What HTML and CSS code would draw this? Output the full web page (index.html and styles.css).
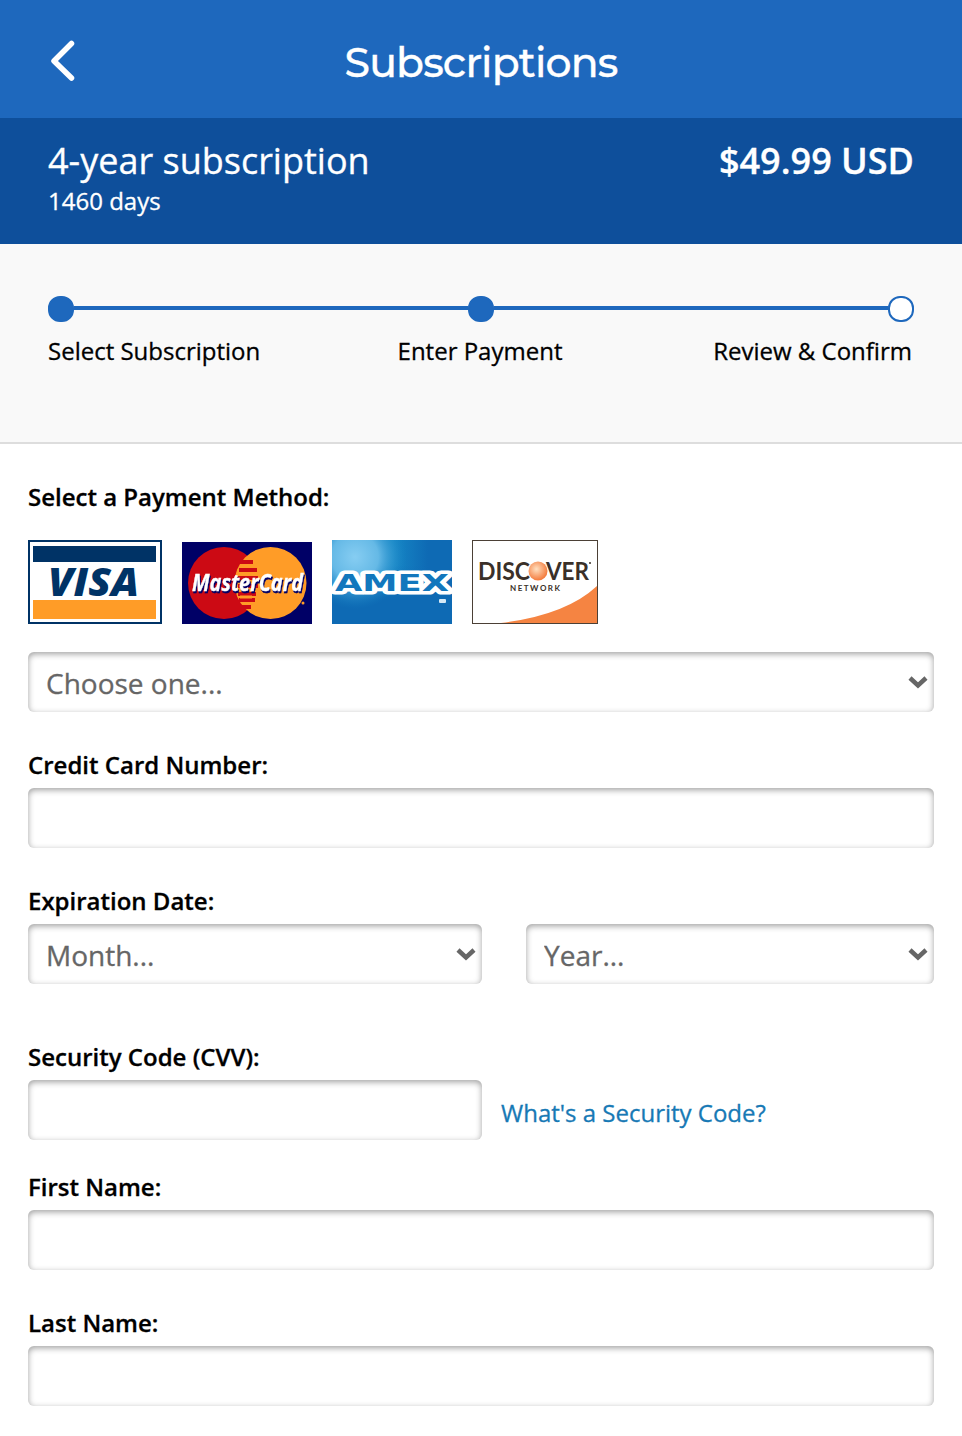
FILE: index.html
```
<!DOCTYPE html>
<html lang="en">
<head>
  <meta charset="UTF-8">
  <title>Subscriptions</title>
  <link rel="stylesheet" href="styles.css">
</head>
<body>

  <header class="top-bar">
    <a href="#" class="back" aria-label="Back">
      <svg width="26" height="42" viewBox="0 0 26 42"><path d="M21.500 3.500 L4 21 L21.500 38" fill="none" stroke="#fff" stroke-width="5.500" stroke-linecap="round" stroke-linejoin="round"/></svg>
    </a>
    <h1>Subscriptions</h1>
  </header>

  <section class="plan">
    <div>
      <div class="plan-name">4-year subscription</div>
      <div class="plan-days">1460 days</div>
    </div>
    <div class="plan-price">$49.99 USD</div>
  </section>

  <section class="progress">
    <div class="track">
      <span class="dot"></span>
      <span class="line"></span>
      <span class="dot"></span>
      <span class="line"></span>
      <span class="dot empty"></span>
    </div>
    <div class="steps">
      <span>Select Subscription</span>
      <span>Enter Payment</span>
      <span>Review &amp; Confirm</span>
    </div>
  </section>

  <form class="payment">
    <label for="method">Select a Payment Method:</label>

    <div class="cards">
      <svg width="134" height="84" viewBox="0 0 134 84">
        <rect x="1" y="1" width="132" height="82" fill="#fff" stroke="#003366" stroke-width="2"/>
        <rect x="5" y="6" width="123" height="16" fill="#003366"/>
        <rect x="5" y="60" width="123" height="19" fill="#ff9c27"/>
        <text x="20" y="56" class="visa" textLength="91" lengthAdjust="spacingAndGlyphs">VISA</text>
      </svg>
      <svg width="130" height="82" viewBox="0 0 130 82">
        <rect width="130" height="82" fill="#000066"/>
        <circle cx="42" cy="41" r="36" fill="#cc0a14"/>
        <circle cx="88.500" cy="41" r="36" fill="#ff9c27"/>
        <path d="M58 20h13M57 28h18M56 36h20M56 44h20M56 52h18M57 58h16M60 65h9" stroke="#cc0a14" stroke-width="4"/>
        <path d="M60 24h13M57 32h13M56 48h14M58 55h12M61 61.500h11" stroke="#ff9c27" stroke-width="3"/>
        <text x="10" y="49" class="mastercard" textLength="111" lengthAdjust="spacingAndGlyphs">MasterCard</text>
        <circle cx="121" cy="61" r="1.500" fill="#ff9c27"/>
      </svg>
      <svg width="120" height="84" viewBox="0 0 120 84">
        <defs>
          <linearGradient id="amexBase" x1="0" y1="0" x2="1" y2="0">
            <stop offset="0" stop-color="#1b7fc4"/>
            <stop offset=".5" stop-color="#1687c6"/>
            <stop offset=".8" stop-color="#0e6ab4"/>
          </linearGradient>
          <radialGradient id="amexGlow" gradientUnits="userSpaceOnUse" cx="23" cy="17" r="52">
            <stop offset="0" stop-color="#86cdf2"/>
            <stop offset=".45" stop-color="#65b9e6"/>
            <stop offset="1" stop-color="#1283c4" stop-opacity="0"/>
          </radialGradient>
          <linearGradient id="amexLow" x1="0" y1="0" x2="0" y2="1">
            <stop offset=".3" stop-color="#0e6ab4" stop-opacity="0"/>
            <stop offset=".7" stop-color="#0e6ab4"/>
          </linearGradient>
        </defs>
        <rect width="120" height="84" fill="url(#amexBase)"/>
        <rect width="120" height="84" fill="url(#amexLow)"/>
        <rect width="120" height="84" fill="url(#amexGlow)"/>
        <text x="3" y="51" class="amex" textLength="114" lengthAdjust="spacingAndGlyphs">AMEX</text>
        <rect x="107" y="59" width="7" height="4" rx="1" fill="#d5e9f6"/>
      </svg>
      <svg width="126" height="84" viewBox="0 0 126 84">
        <defs>
          <radialGradient id="discoverBall" cx=".42" cy=".4" r=".6">
            <stop offset="0" stop-color="#ffe0c0"/>
            <stop offset="1" stop-color="#f47b3c"/>
          </radialGradient>
        </defs>
        <rect width="126" height="84" fill="#fff"/>
        <path d="M29 83 Q94 75 125 46 V83 Z" fill="#f58442"/>
        <rect x=".5" y=".5" width="125" height="83" fill="none" stroke="#4b4036"/>
        <text x="6" y="40" class="discover" textLength="52" lengthAdjust="spacingAndGlyphs">DISC</text>
        <circle cx="66" cy="31" r="9.500" fill="url(#discoverBall)"/>
        <text x="74" y="40" class="discover" textLength="43" lengthAdjust="spacingAndGlyphs">VER</text>
        <circle cx="118" cy="23" r="1" fill="#3a3029"/>
        <text x="38" y="51" class="network" textLength="50" lengthAdjust="spacing">NETWORK</text>
      </svg>
    </div>

    <div class="select">
      <select id="method">
        <option>Choose one...</option>
        <option>Visa</option>
        <option>MasterCard</option>
        <option>American Express</option>
        <option>Discover</option>
      </select>
      <svg class="arrow" width="20" height="14" viewBox="0 0 20 14"><path d="M2 3 L10 10.500 L18 3" fill="none" stroke="#666" stroke-width="4.500"/></svg>
    </div>

    <label for="number">Credit Card Number:</label>
    <input type="text" id="number">

    <label for="month">Expiration Date:</label>
    <div class="row expiration">
      <div class="select half">
        <select id="month">
          <option>Month...</option>
        </select>
        <svg class="arrow" width="20" height="14" viewBox="0 0 20 14"><path d="M2 3 L10 10.500 L18 3" fill="none" stroke="#666" stroke-width="4.500"/></svg>
      </div>
      <div class="select year">
        <select id="year" aria-label="Year">
          <option>Year...</option>
        </select>
        <svg class="arrow" width="20" height="14" viewBox="0 0 20 14"><path d="M2 3 L10 10.500 L18 3" fill="none" stroke="#666" stroke-width="4.500"/></svg>
      </div>
    </div>

    <label for="cvv">Security Code (CVV):</label>
    <div class="row cvv">
      <input type="text" id="cvv" class="half">
      <a href="#" class="help">What's a Security Code?</a>
    </div>

    <label for="first">First Name:</label>
    <input type="text" id="first">

    <label for="last">Last Name:</label>
    <input type="text" id="last">
  </form>

</body>
</html>
```
FILE: styles.css
```
* {
  box-sizing: border-box;
}

body {
  margin: 0;
  font-family: "Open Sans", "Noto Sans", sans-serif;
  font-size: 24px;
  line-height: 32px;
  color: #000;
  background-color: #fff;
  -webkit-text-stroke: 0.3px;
}

.top-bar {
  display: grid;
  grid-template-columns: 1fr auto 1fr;
  align-items: center;
  height: 118px;
  padding: 4px 48px 0;
  background-color: #1e68bd;
  color: #fff;
}

.back {
  display: flex;
  padding-left: 2px;
}

h1 {
  margin: 0;
  padding-top: 2px;
  font-family: Montserrat, Inter, sans-serif;
  font-size: 41px;
  font-weight: 500;
  line-height: 50px;
  letter-spacing: -0.85px;
}

.plan {
  display: flex;
  justify-content: space-between;
  height: 126px;
  padding: 18px 48px 0;
  background-color: #0e4f9b;
  color: #fff;
}

.plan-name,
.plan-price {
  font-size: 36px;
  line-height: 50px;
}

.plan-days {
  margin-top: -1px;
}

.plan-price {
  font-weight: 600;
}

.progress {
  height: 200px;
  padding: 52px 48px 0;
  background-color: #f9f9f9;
  border-bottom: 2px solid #ddd;
}

.track {
  display: flex;
}

.dot {
  width: 26px;
  height: 26px;
  border: 2px solid #1e68bd;
  border-radius: 12px;
  background-color: #1e68bd;
}

.dot.empty {
  background-color: #fff;
}

.line {
  flex: 1;
  height: 4px;
  margin-top: 10px;
  background-color: #1e68bd;
}

.steps {
  display: grid;
  grid-template-columns: 1fr auto 1fr;
  margin: 13px 2px 0 0;
}

.steps span:last-child {
  text-align: right;
}

.payment {
  padding: 37px 28px 30px;
}

label {
  display: block;
  margin: 37px 0 7px;
  font-weight: 600;
}

label:first-child {
  margin: 0;
}

.cards {
  display: flex;
  align-items: flex-end;
  gap: 20px;
  margin: 27px 0 28px;
}

.visa {
  font: italic 800 39px "Open Sans", sans-serif;
  fill: #003366;
}

.mastercard {
  font: italic bold 24px "Open Sans", sans-serif;
  fill: #fff;
  stroke: #fff;
  stroke-width: 0.4px;
  filter: drop-shadow(1px 2px 0 #000066);
}

.amex {
  font: bold 23px "DejaVu Sans", sans-serif;
  fill: #1277bd;
  stroke: #fff;
  stroke-width: 7px;
  stroke-linejoin: round;
  paint-order: stroke;
}

.discover {
  font: bold 25px Lato, sans-serif;
  fill: #3a3029;
}

.network {
  font: bold 8px Lato, sans-serif;
  fill: #3a3029;
}

input,
select {
  display: block;
  width: 100%;
  height: 60px;
  margin: 0;
  padding: 2px 18px 0;
  border: none;
  border-radius: 6px;
  background-color: #fff;
  box-shadow: inset 0 2px 6px rgba(0, 0, 0, 0.38);
  font-family: inherit;
  font-size: 28px;
  color: #666;
  appearance: none;
}

.select {
  display: grid;
  width: 100%;
}

.select select,
.arrow {
  grid-area: 1 / 1;
}

.arrow {
  align-self: center;
  justify-self: end;
  margin-right: 6px;
  pointer-events: none;
}

.row {
  display: flex;
}

.expiration {
  justify-content: space-between;
  margin-bottom: 57px;
}

.half,
.select.half {
  width: 454px;
}

.select.year {
  width: 408px;
}

.cvv {
  align-items: center;
  gap: 19px;
  margin-bottom: -6px;
}

.help {
  padding-top: 6px;
  color: #1779b5;
  text-decoration: none;
}
```
